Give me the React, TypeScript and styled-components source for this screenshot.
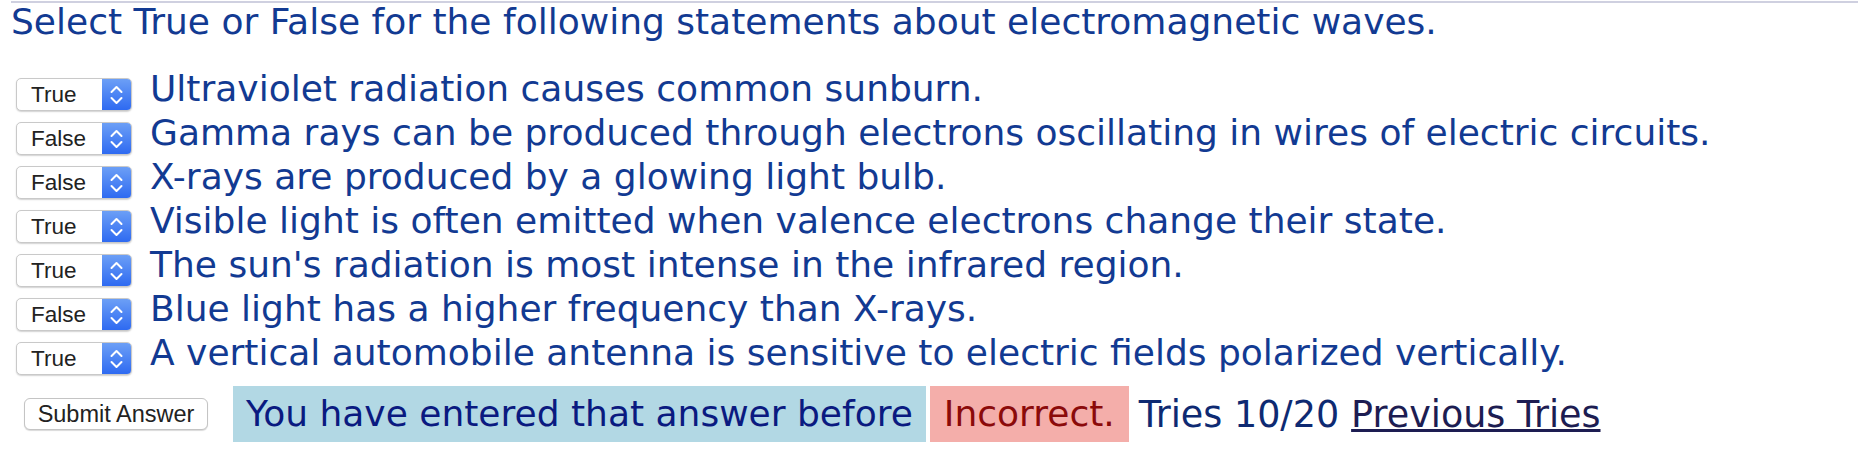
import React from "react";
import styled, { createGlobalStyle } from "styled-components";

const Global = createGlobalStyle`
  html, body { margin: 0; padding: 0; background: #ffffff; }
  body { font-family: "DejaVu Sans", Verdana, sans-serif; }
`;

const Page = styled.div`
  padding-left: 11px;
  width: 1858px;
  box-sizing: border-box;
`;

const Rule = styled.div`
  height: 2px;
  margin-top: 1px;
  background: #cfd0e0;
`;

const Heading = styled.div`
  font-size: 36px;
  line-height: 37px;
  color: #123a92;
  margin: 0;
  white-space: nowrap;
`;

const List = styled.div`
  margin-top: 33px;
  padding-left: 5px;
  display: flex;
  flex-direction: column;
`;

const Row = styled.div`
  height: 44px;
  display: flex;
  align-items: flex-start;
  gap: 18px;
`;

const SelectBox = styled.div`
  margin-top: 5px;
  width: 116px;
  height: 33px;
  box-sizing: border-box;
  display: flex;
  border: 1px solid #c9c9c9;
  border-radius: 5px;
  background: #ffffff;
  box-shadow: 0 1px 1.5px rgba(0, 0, 0, 0.18);
  overflow: hidden;
  flex-shrink: 0;
`;

const SelectText = styled.span`
  flex: 1;
  padding-left: 14px;
  font-family: "Liberation Sans", Arial, sans-serif;
  font-size: 22.5px;
  line-height: 31px;
  color: #222222;
`;

const Stepper = styled.span`
  width: 29px;
  display: flex;
  align-items: center;
  justify-content: center;
  background: linear-gradient(#6c9ff6, #2e6af1);
`;

const Statement = styled.span`
  font-size: 36px;
  line-height: 31px;
  color: #123a92;
  white-space: nowrap;
`;

const Bottom = styled.div`
  margin-top: 5px;
  padding-left: 13px;
  display: flex;
  align-items: center;
`;

const SubmitButton = styled.button`
  width: 184px;
  height: 32px;
  margin-right: 25px;
  border: 1px solid #c4c4c4;
  border-radius: 6px;
  background: #ffffff;
  box-shadow: 0 1px 1px rgba(0, 0, 0, 0.15);
  font-family: "Liberation Sans", Arial, sans-serif;
  font-size: 23.5px;
  color: #222222;
  padding: 0;
`;

const Notice = styled.span<{ $bg: string; $fg: string; $pad: number }>`
  display: inline-block;
  height: 56px;
  line-height: 56px;
  padding: 0 ${(p) => p.$pad}px;
  margin-right: 4px;
  background: ${(p) => p.$bg};
  color: ${(p) => p.$fg};
  font-size: 36px;
  white-space: nowrap;
`;

const Tries = styled.span`
  font-size: 36.5px;
  color: #0e2a72;
  margin-left: 6px;
  white-space: nowrap;
`;

const TriesLink = styled.a`
  font-size: 36.5px;
  color: #1d1d52;
  text-decoration: underline;
  margin-left: 12px;
  white-space: nowrap;
`;

const Chevrons = () => (
  <svg width="13" height="22" viewBox="0 0 13 22" fill="none">
    <path d="M1.5 8 L6.5 3 L11.5 8" stroke="#ffffff" strokeWidth="2" strokeLinecap="round" strokeLinejoin="round" />
    <path d="M1.5 14 L6.5 19 L11.5 14" stroke="#ffffff" strokeWidth="2" strokeLinecap="round" strokeLinejoin="round" />
  </svg>
);

const items: { value: string; text: string }[] = [
  { value: "True", text: "Ultraviolet radiation causes common sunburn." },
  { value: "False", text: "Gamma rays can be produced through electrons oscillating in wires of electric circuits." },
  { value: "False", text: "X-rays are produced by a glowing light bulb." },
  { value: "True", text: "Visible light is often emitted when valence electrons change their state." },
  { value: "True", text: "The sun's radiation is most intense in the infrared region." },
  { value: "False", text: "Blue light has a higher frequency than X-rays." },
  { value: "True", text: "A vertical automobile antenna is sensitive to electric fields polarized vertically." },
];

export default function App() {
  return (
    <>
      <Global />
      <Page>
        <Rule />
        <Heading>Select True or False for the following statements about electromagnetic waves.</Heading>
        <List>
          {items.map((it, i) => (
            <Row key={i}>
              <SelectBox>
                <SelectText>{it.value}</SelectText>
                <Stepper>
                  <Chevrons />
                </Stepper>
              </SelectBox>
              <Statement>{it.text}</Statement>
            </Row>
          ))}
        </List>
        <Bottom>
          <SubmitButton>Submit Answer</SubmitButton>
          <Notice $bg="#b2d8e4" $fg="#0a1a80" $pad={13}>You have entered that answer before</Notice>
          <Notice $bg="#f4aeaa" $fg="#8b0a0a" $pad={14}>Incorrect.</Notice>
          <Tries>Tries 10/20</Tries>
          <TriesLink href="#">Previous Tries</TriesLink>
        </Bottom>
      </Page>
    </>
  );
}
